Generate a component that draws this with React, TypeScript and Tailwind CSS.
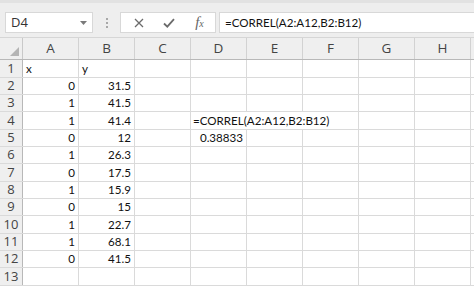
import React from 'react';

const COLS = ['A', 'B', 'C', 'D', 'E', 'F', 'G', 'H', ''];

// x / y sample data in A2:B12
const DATA: [number, string][] = [
  [0, '31.5'],
  [1, '41.5'],
  [1, '41.4'],
  [0, '12'],
  [1, '26.3'],
  [0, '17.5'],
  [1, '15.9'],
  [0, '15'],
  [1, '22.7'],
  [1, '68.1'],
  [0, '41.5'],
];

const cellFont = { fontFamily: 'Lato, "Open Sans", sans-serif' };
const uiFont = { fontFamily: '"Open Sans", "Noto Sans", sans-serif' };

const FormulaBar: React.FC = () => (
  <div className="h-[38px] bg-[#eeeeee] border-t-[3px] border-[#e2e2e2] border-b border-b-[#d6d6d6] flex items-start pt-[9px] pl-[5px]">
    {/* Name box */}
    <div className="w-[88px] h-[21px] bg-white border border-[#d8d8d8] flex items-center justify-between pl-[5px] pr-[5px]">
      <span className="text-[13px] text-[#333]" style={uiFont}>D4</span>
      <svg width="7" height="4" viewBox="0 0 7 4">
        <path d="M0 0 L7 0 L3.5 4 Z" fill="#7a7a7a" />
      </svg>
    </div>
    {/* Separator dots */}
    <div className="w-[27px] h-[21px] flex flex-col items-center justify-center gap-[2px]">
      <span className="w-[2px] h-[2px] bg-[#a8a8a8]" />
      <span className="w-[2px] h-[2px] bg-[#a8a8a8]" />
      <span className="w-[2px] h-[2px] bg-[#a8a8a8]" />
    </div>
    {/* Cancel / enter / fx */}
    <div className="w-[96px] h-[21px] bg-white border border-[#d8d8d8] flex items-center">
      <div className="w-[33px] flex justify-center pl-[2px]">
        <svg width="10" height="10" viewBox="0 0 10 10">
          <path d="M1 1 L9 9 M9 1 L1 9" stroke="#6b6b6b" strokeWidth="1.3" />
        </svg>
      </div>
      <div className="w-[30px] flex justify-center">
        <svg width="12" height="10" viewBox="0 0 12 10">
          <path d="M1 5.5 L4.3 8.6 L11 1.2" stroke="#6b6b6b" strokeWidth="1.8" fill="none" />
        </svg>
      </div>
      <div className="w-[31px] flex justify-center">
        <span className="text-[15px] italic text-[#666] leading-none" style={{ fontFamily: '"Liberation Serif", serif' }}>
          f<span className="text-[10px]">x</span>
        </span>
      </div>
    </div>
    {/* Formula input */}
    <div className="ml-[3px] flex-1 h-[21px] bg-white border border-r-0 border-[#d8d8d8] flex items-center pl-[5px]">
      <span className="text-[11.6px] text-[#111] whitespace-nowrap" style={cellFont}>=CORREL(A2:A12,B2:B12)</span>
    </div>
  </div>
);

const App: React.FC = () => {
  const rows = Array.from({ length: 13 }, (_, i) => i + 1);

  const cellContent = (row: number, col: string): React.ReactNode => {
    if (row === 1 && col === 'A') return <span className="pl-[3px]">x</span>;
    if (row === 1 && col === 'B') return <span className="pl-[3px]">y</span>;
    if (row >= 2 && row <= 12 && col === 'A') return <span className="ml-auto pr-[3px]">{DATA[row - 2][0]}</span>;
    if (row >= 2 && row <= 12 && col === 'B') return <span className="ml-auto pr-[3px]">{DATA[row - 2][1]}</span>;
    if (row === 4 && col === 'D')
      return <span className="relative z-10 bg-white pl-[2px] pr-[2px] whitespace-nowrap">=CORREL(A2:A12,B2:B12)</span>;
    if (row === 5 && col === 'D') return <span className="ml-auto pr-[3px]">0.38833</span>;
    return null;
  };

  return (
    <div className="w-[474px] h-[289px] overflow-hidden bg-white">
      <FormulaBar />
      {/* Column headers */}
      <div className="flex h-[22px] bg-[#efefef] border-b border-[#b8b8b8]">
        <div className="w-[23px] shrink-0 border-r border-[#c9c9c9] relative">
          <svg className="absolute right-[3px] bottom-[3px]" width="9" height="9" viewBox="0 0 9 9">
            <path d="M9 0 L9 9 L0 9 Z" fill="#b4b4b4" />
          </svg>
        </div>
        {COLS.map((c, i) => (
          <div
            key={i}
            className="w-[56px] shrink-0 border-r border-[#d2d2d2] flex items-center justify-center text-[13.5px] text-[#444]"
            style={uiFont}
          >
            {c}
          </div>
        ))}
      </div>
      {/* Rows */}
      {rows.map((r) => (
        <div key={r} className={`flex shrink-0 ${r % 3 === 1 ? 'h-[18px]' : 'h-[17px]'} border-b border-[#dadada]`}>
          <div
            className="w-[23px] shrink-0 bg-[#efefef] border-r border-[#b8b8b8] flex items-center justify-center text-[13px] text-[#444]"
            style={uiFont}
          >
            {r}
          </div>
          {COLS.map((c, i) => (
            <div
              key={i}
              className="w-[56px] shrink-0 border-r border-[#dadada] flex items-center text-[11.6px] text-[#111] overflow-visible"
              style={cellFont}
            >
              {cellContent(r, c)}
            </div>
          ))}
        </div>
      ))}
    </div>
  );
};

export default App;
